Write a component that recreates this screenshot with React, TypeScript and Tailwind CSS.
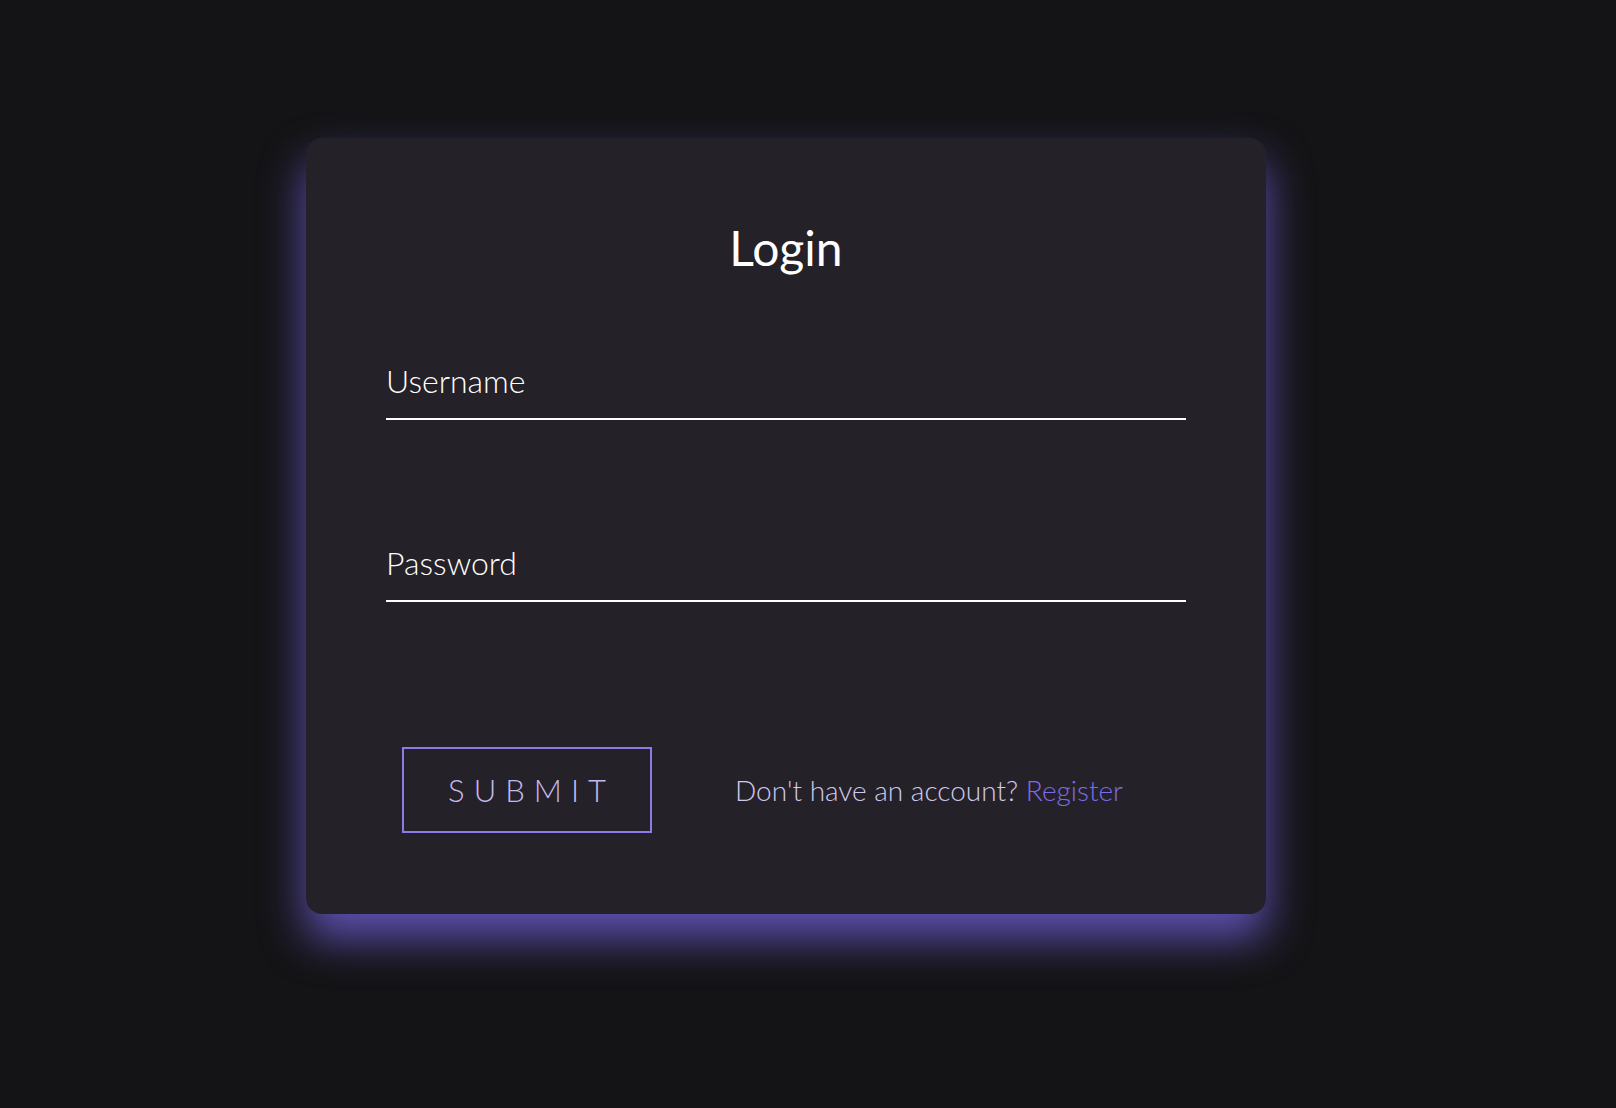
import React from "react";

export default function App() {
  return (
    <div
      className="min-h-screen w-full bg-[#141416] flex justify-center items-start pt-[138px] pr-[44px]"
      style={{ fontFamily: "Lato, 'Open Sans', sans-serif" }}
    >
      <div className="w-[960px] rounded-[16px] bg-[#252128] px-20 pt-[81px] pb-[81px] shadow-[0_24px_44px_rgba(124,104,238,0.72)]">
        <h1 className="text-center text-[48px] leading-[58px] font-normal text-white">Login</h1>

        <div className="mt-[84px] border-b-2 border-white pb-[17px]">
          <span className="block text-[32px] leading-[40px] font-light text-white">Username</span>
        </div>

        <div className="mt-[123px] border-b-2 border-white pb-[17px]">
          <span className="block text-[32px] leading-[40px] font-light text-white">Password</span>
        </div>

        <div className="mt-[145px] flex items-center">
          <button className="ml-4 w-[250px] h-[86px] border-2 border-[#8b7ae8] bg-transparent text-[31px] font-light tracking-[9px] pl-[9px] text-[#c3b9f0]">
            SUBMIT
          </button>
          <p className="ml-[83px] text-[28px] font-light text-[#d0c9ee]">
            Don't have an account? <span className="text-[#7c6ce8]">Register</span>
          </p>
        </div>
      </div>
    </div>
  );
}
